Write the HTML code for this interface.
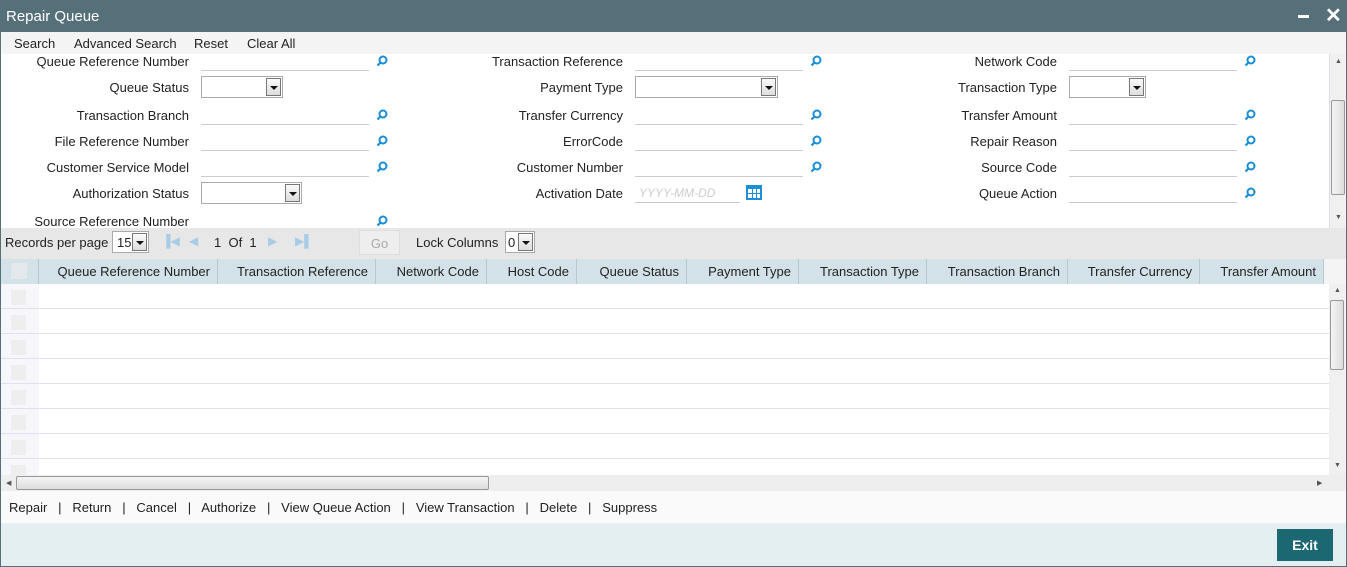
<!DOCTYPE html>
<html><head><style>
*{margin:0;padding:0;box-sizing:border-box}
body{width:1347px;height:567px;overflow:hidden;font-family:"Liberation Sans",sans-serif;font-size:13px;color:#222;background:#fff;position:relative}
.a{position:absolute}
.title{left:0;top:0;width:1347px;height:32px;background:#56707a;color:#fff;font-size:15px}
.tb{left:1px;top:32px;width:1345px;height:22px;background:#f4f4f4}
.tb span{position:absolute;top:4px}
.lbl{text-align:right;width:220px}
.inp{height:1px;background:#ccc}
.sel{border:1px solid #aaa;background:#fff;height:22px}
.sel i{position:absolute;right:1px;top:1px;width:15px;height:18px;border:1px solid #777;background:linear-gradient(#fafafa,#ddd)}
.sel i:after{content:"";position:absolute;left:3px;top:7px;border:4px solid transparent;border-top:4px solid #111}
.hd{top:259px;height:25px;background:#d3e2e8;border-right:1px solid #b5c7cf;text-align:right;padding:5px 7px 0 0;white-space:nowrap}
.row{left:1px;width:1328px;height:1px;background:#dde2ee}
.cb{left:11px;width:15px;height:15px;background:#eee}
.ar{position:absolute;font-size:7px;color:#555}
</style></head><body>
<div class="a title"><span class="a" style="left:6px;top:8px">Repair Queue</span>
<span class="a" style="left:1298px;top:15px;width:11px;height:3px;background:#fff"></span>
<span class="a" style="left:1325px;top:3px;font-size:20px;font-weight:bold">✕</span></div>
<div class="a" style="left:0;top:32px;width:1px;height:535px;background:#56707a"></div>
<div class="a" style="left:1346px;top:32px;width:1px;height:535px;background:#56707a"></div>
<div class="a tb"><span style="left:13px">Search</span><span style="left:73px">Advanced Search</span><span style="left:193px">Reset</span><span style="left:246px">Clear All</span></div>

<div class="a" style="left:1329px;top:54px;width:17px;height:174px;background:#f0f0f0;border-left:1px solid #dde"></div>
<div class="a" style="left:1331px;top:100px;width:14px;height:95px;border:1px solid #999;border-radius:2px;background:linear-gradient(90deg,#f4f4f4,#ddd)"></div>
<span class="ar" style="left:1335px;top:58px">▲</span><span class="ar" style="left:1335px;top:214px">▼</span>

<div id="f"></div>

<div class="a" style="left:1px;top:228px;width:1345px;height:31px;background:#e7e7e7"></div>
<span class="a" style="left:5px;top:235px">Records per page</span>
<div class="a sel" style="left:112px;top:231px;width:37px"><span class="a" style="left:4px;top:3px">15</span><i></i></div>
<span class="a" style="left:162px;top:234px;color:#a8cce6;font-size:12px">▐◀</span>
<span class="a" style="left:189px;top:234px;color:#a8cce6;font-size:12px">◀</span>
<span class="a" style="left:214px;top:235px">1 &nbsp;Of &nbsp;1</span>
<span class="a" style="left:268px;top:234px;color:#a8cce6;font-size:12px">▶</span>
<span class="a" style="left:295px;top:234px;color:#a8cce6;font-size:12px">▶▌</span>
<div class="a" style="left:359px;top:230px;width:41px;height:25px;background:#eee;border:1px solid #ddd;color:#aaa;text-align:center;padding-top:5px">Go</div>
<span class="a" style="left:416px;top:235px">Lock Columns</span>
<div class="a sel" style="left:505px;top:231px;width:30px"><span class="a" style="left:2px;top:3px">0</span><i></i></div>

<div class="a hd" style="left:1px;width:38px"></div>
<div class="a" style="left:11px;top:263px;width:16px;height:16px;background:#e2e8ec"></div>
<div class="a hd" style="left:39px;width:179px">Queue Reference Number</div>
<div class="a hd" style="left:218px;width:158px">Transaction Reference</div>
<div class="a hd" style="left:376px;width:111px">Network Code</div>
<div class="a hd" style="left:487px;width:90px">Host Code</div>
<div class="a hd" style="left:577px;width:110px">Queue Status</div>
<div class="a hd" style="left:687px;width:112px">Payment Type</div>
<div class="a hd" style="left:799px;width:128px">Transaction Type</div>
<div class="a hd" style="left:927px;width:141px">Transaction Branch</div>
<div class="a hd" style="left:1068px;width:132px">Transfer Currency</div>
<div class="a hd" style="left:1200px;width:124px">Transfer Amount</div>
<div class="a" style="left:1324px;top:259px;width:22px;height:25px;background:#f4f4f4"></div>
<div class="a" style="left:1px;top:284px;width:38px;height:191px;background:#f7f7fb"></div>
<div id="g"></div>
<div class="a" style="left:1329px;top:284px;width:17px;height:191px;background:#f0f0f0"></div>
<div class="a" style="left:1330px;top:300px;width:14px;height:70px;border:1px solid #999;border-radius:2px;background:linear-gradient(90deg,#f4f4f4,#ddd)"></div>
<span class="ar" style="left:1334px;top:287px">▲</span><span class="ar" style="left:1334px;top:462px">▼</span>
<div class="a" style="left:1px;top:475px;width:1345px;height:16px;background:#eee"></div>
<div class="a" style="left:16px;top:476px;width:473px;height:14px;border:1px solid #999;border-radius:2px;background:linear-gradient(#f4f4f4,#ddd)"></div>
<span class="ar" style="left:6px;top:479px">◀</span><span class="ar" style="left:1317px;top:479px">▶</span>

<div class="a" style="left:1px;top:491px;width:1345px;height:32px;background:#fafafa"></div>
<span class="a" style="left:9px;top:500px">Repair &nbsp; | &nbsp; Return &nbsp; | &nbsp; Cancel &nbsp; | &nbsp; Authorize &nbsp; | &nbsp; View Queue Action &nbsp; | &nbsp; View Transaction &nbsp; | &nbsp; Delete &nbsp; | &nbsp; Suppress</span>
<div class="a" style="left:1px;top:523px;width:1345px;height:43px;background:#e4eff1"></div>
<div class="a" style="left:0;top:566px;width:1347px;height:1px;background:#56707a"></div>
<div class="a" style="left:1277px;top:529px;width:56px;height:32px;background:#1b6873;color:#fff;font-weight:bold;font-size:14px;text-align:center;padding-top:8px">Exit</div>

<script>
var f=document.getElementById('f'),h='';
var ico='<svg width="12" height="12" viewBox="0 0 12 12"><circle cx="7" cy="5" r="3.5" fill="none" stroke="#1a8fd6" stroke-width="2"/><line x1="4.5" y1="7.5" x2="1.5" y2="10.5" stroke="#1a8fd6" stroke-width="2.2"/></svg>';
function L(x,y,t){h+='<span class="a lbl" style="left:'+(x-220)+'px;top:'+(y-7)+'px">'+t+'</span>';}
function I(x,y){h+='<div class="a inp" style="left:'+x+'px;top:'+(y+9)+'px;width:168px"></div>';h+='<span class="a" style="left:'+(x+175)+'px;top:'+(y-6)+'px">'+ico+'</span>';}
function S(x,y,w){h+='<div class="a sel" style="left:'+x+'px;top:'+(y-11)+'px;width:'+w+'px"><i></i></div>';}
var c=[[189,201],[623,635],[1057,1069]];
var rows=[
[['Queue Reference Number','i'],['Transaction Reference','i'],['Network Code','i']],
[['Queue Status','s',82],['Payment Type','s',143],['Transaction Type','s',77]],
[['Transaction Branch','i'],['Transfer Currency','i'],['Transfer Amount','i']],
[['File Reference Number','i'],['ErrorCode','i'],['Repair Reason','i']],
[['Customer Service Model','i'],['Customer Number','i'],['Source Code','i']],
[['Authorization Status','s',101],['Activation Date','d'],['Queue Action','i']],
[['Source Reference Number','i']]];
var ys=[61,87,115,141,167,193,221];
rows.forEach(function(r,ri){var y=ys[ri];r.forEach(function(e,ci){L(c[ci][0],y,e[0]);
if(e[1]=='i')I(c[ci][1],y);else if(e[1]=='s')S(c[ci][1],y,e[2]);
else{h+='<div class="a inp" style="left:635px;top:202px;width:105px"></div><span class="a" style="left:639px;top:186px;color:#ccc;font-style:italic;font-size:12px">YYYY-MM-DD</span><div class="a" style="left:746px;top:185px;width:16px;height:15px;background:#1a8fd6;border:2px solid #1a8fd6;border-top-width:4px;background-image:linear-gradient(90deg,transparent 4px,#1a8fd6 4px,#1a8fd6 5px,transparent 5px,transparent 8px,#1a8fd6 8px,#1a8fd6 9px,transparent 9px),linear-gradient(#fff 4px,#1a8fd6 4px,#1a8fd6 5px,#fff 5px);"></div>';}
});});
f.innerHTML=h;
var g='';for(var i=0;i<8;i++){var y=284+i*25;g+='<div class="a row" style="top:'+(y+24)+'px"></div><div class="a cb" style="top:'+(y+6)+'px"></div>';}
document.getElementById('g').innerHTML=g;
</script>
</body></html>
